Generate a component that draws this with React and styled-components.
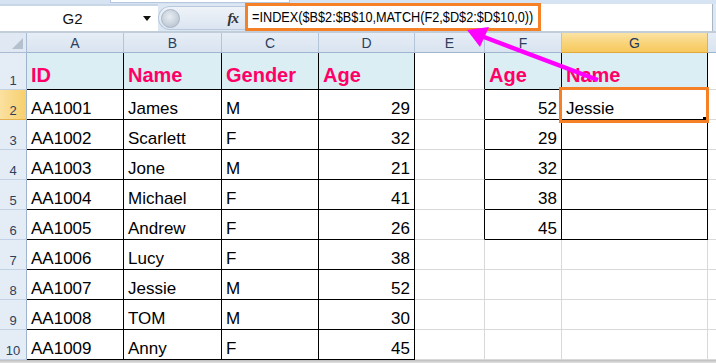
import React from "react";
import styled, { createGlobalStyle } from "styled-components";

const BLACK = "#000";
const GRID = "#d9d9d9";
const PINK = "#ff0066";
const ORANGE = "#f68026";

const columns = ["A", "B", "C", "D", "E", "F", "G", ""];

const data = [
  ["AA1001", "James", "M", 29, 52, "Jessie"],
  ["AA1002", "Scarlett", "F", 32, 29, ""],
  ["AA1003", "Jone", "M", 21, 32, ""],
  ["AA1004", "Michael", "F", 41, 38, ""],
  ["AA1005", "Andrew", "F", 26, 45, ""],
  ["AA1006", "Lucy", "F", 38, "", ""],
  ["AA1007", "Jessie", "M", 52, "", ""],
  ["AA1008", "TOM", "M", 30, "", ""],
  ["AA1009", "Anny", "F", 45, "", ""],
];

const GlobalStyle = createGlobalStyle`
  html, body {
    margin: 0;
    padding: 0;
    background: #fff;
    overflow: hidden;
  }
  body {
    font-family: "Liberation Sans", Arial, sans-serif;
  }
`;

const App = () => {
  const header = ["ID", "Name", "Gender", "Age", "", "Age", "Name", ""];

  // black borders for A1:D10 and F1:G6, grey gridlines elsewhere
  const borderFor = (row, col) => {
    const inMain = col <= 3;
    const inSecond = (col === 5 || col === 6) && row <= 6;
    return {
      right: inMain || inSecond || (col === 4 && row <= 6) ? BLACK : GRID,
      bottom: inMain || inSecond ? BLACK : GRID,
    };
  };

  const rows = [header, ...data.map((d) => [d[0], d[1], d[2], d[3], "", d[4], d[5], ""])];

  return (
    <Window>
      <GlobalStyle />
      <RibbonEdge>
        <RibbonTab />
      </RibbonEdge>
      <FormulaBar>
        <NameBox>
          <NameLabel>G2</NameLabel>
          <DropArrow />
        </NameBox>
        <Splitter>
          <Knob />
          <Fx>fx</Fx>
        </Splitter>
        <FormulaInput>
          <Highlight>
            <Squeezed>=INDEX($B$2:$B$10,MATCH(F2,$D$2:$D$10,0))</Squeezed>
          </Highlight>
        </FormulaInput>
      </FormulaBar>
      <BarGap />
      <Sheet>
        <Corner />
        {columns.map((c, i) => (
          <ColHead key={i} $selected={c === "G"}>
            {c}
          </ColHead>
        ))}
        {rows.map((cells, r) => {
          const row = r + 1;
          return (
            <React.Fragment key={row}>
              <RowHead $selected={row === 2}>{row}</RowHead>
              {cells.map((v, c) => {
                const b = borderFor(row, c);
                const tinted = row === 1 && (c <= 3 || c === 5 || c === 6);
                return (
                  <Cell
                    key={c}
                    $right={b.right}
                    $bottom={b.bottom}
                    $bg={tinted ? "#daeef3" : "#fff"}
                    $num={typeof v === "number"}
                    $head={row === 1}
                  >
                    {v}
                  </Cell>
                );
              })}
            </React.Fragment>
          );
        })}
        <Selection>
          <FillHandle />
        </Selection>
      </Sheet>
      <BottomShadow />
      <Arrow viewBox="0 0 716 363">
        <line x1="598" y1="80" x2="484" y2="37" stroke="#ff00ff" strokeWidth="4.5" />
        <polygon points="467,30 489,27 480,47" fill="#ff00ff" />
      </Arrow>
    </Window>
  );
};

const Window = styled.div`
  position: relative;
  width: 716px;
  height: 363px;
  overflow: hidden;
  background: #fff;
  display: flex;
  flex-direction: column;
`;

const RibbonEdge = styled.div`
  height: 4px;
  background: #d6e3f3;
  display: flex;
`;

const RibbonTab = styled.div`
  margin-left: 110px;
  width: 180px;
  height: 3px;
  background: #fff;
  border: 1px solid #b4c7df;
  border-top: none;
  box-sizing: border-box;
`;

const FormulaBar = styled.div`
  height: 27px;
  background: #dde7f3;
  display: flex;
  align-items: stretch;
`;

const NameBox = styled.div`
  width: 158px;
  background: #fff;
  border-top: 2px solid #c9d6e6;
  display: flex;
  align-items: center;
  font-size: 15px;
  color: #111;
`;

const NameLabel = styled.span`
  flex: 1;
  text-align: center;
  padding-left: 2px;
`;

const DropArrow = styled.span`
  width: 0;
  height: 0;
  border-left: 4px solid transparent;
  border-right: 4px solid transparent;
  border-top: 5px solid #111;
  margin-right: 7px;
`;

const Splitter = styled.div`
  width: 87px;
  margin: 2px 0 1px;
  background: linear-gradient(#eef3f9, #dbe5f1);
  border: 1px solid #b9c8da;
  border-right: none;
  border-radius: 12px 0 0 12px;
  display: flex;
  align-items: center;
  justify-content: space-between;
  box-sizing: border-box;
`;

const Knob = styled.span`
  width: 17px;
  height: 17px;
  border-radius: 50%;
  margin-left: 2px;
  background: radial-gradient(circle at 45% 40%, #e8edf3 0, #c9d2dc 55%, #aeb9c6 100%);
  border: 1px solid #a9b6c6;
`;

const Fx = styled.span`
  font-family: "Liberation Serif", "Times New Roman", serif;
  font-style: italic;
  font-weight: bold;
  font-size: 15px;
  color: #333;
  margin-right: 7px;
  letter-spacing: -1px;
`;

const FormulaInput = styled.div`
  flex: 1;
  margin-right: 3px;
  background: #fff;
  border-right: 1px solid #a9b6c6;
  display: flex;
  align-items: stretch;
`;

const Highlight = styled.span`
  align-self: flex-start;
  margin-top: -1px;
  width: 296px;
  height: 28px;
  box-sizing: border-box;
  border: 3px solid ${ORANGE};
  padding-left: 4px;
  display: flex;
  align-items: center;
  position: relative;
  z-index: 2;
`;

const Squeezed = styled.span`
  display: inline-block;
  font-size: 15.5px;
  color: #000;
  white-space: nowrap;
  transform: scaleX(0.82);
  transform-origin: left center;
`;

const BarGap = styled.div`
  height: 2px;
  background: #c2cdda;
`;

const Sheet = styled.div`
  position: relative;
  display: grid;
  grid-template-columns: 27px 97px 98px 97px 96px 70px 77px 146px 1fr;
  grid-template-rows: 20px 37px repeat(9, 30px);
`;

const Corner = styled.div`
  background: #dfe8f3;
  border-right: 1px solid #a9bcd4;
  border-bottom: 1px solid #a9bcd4;
  box-sizing: border-box;
  position: relative;
  &::after {
    content: "";
    position: absolute;
    right: 3px;
    bottom: 3px;
    border-left: 11px solid transparent;
    border-bottom: 11px solid #b4c0cd;
  }
`;

const ColHead = styled.div`
  box-sizing: border-box;
  background: ${(p) =>
    p.$selected ? "linear-gradient(#fbe3a4, #f8d274 60%, #f6c95e)" : "linear-gradient(#e6edf6, #d9e4f0)"};
  border-right: 1px solid ${(p) => (p.$selected ? "#e2b251" : "#b3c4da")};
  border-bottom: 1px solid ${(p) => (p.$selected ? "#e2a93a" : "#9fb5cf")};
  display: flex;
  align-items: center;
  justify-content: center;
  font-size: 14px;
  line-height: 16px;
  color: ${(p) => (p.$selected ? "#213a5c" : "#2d3f5c")};
`;

const RowHead = styled.div`
  box-sizing: border-box;
  background: ${(p) => (p.$selected ? "linear-gradient(90deg, #fbe1a0, #f7cf6c)" : "#e4ecf6")};
  border-right: 1px solid #9fb5cf;
  border-bottom: 1px solid ${(p) => (p.$selected ? "#e2b251" : "#c2d1e3")};
  display: flex;
  align-items: flex-end;
  justify-content: center;
  font-size: 13px;
  line-height: 15px;
  padding-bottom: 1px;
  color: #2d3f5c;
`;

const Cell = styled.div`
  box-sizing: border-box;
  min-width: 0;
  overflow: hidden;
  white-space: nowrap;
  background: ${(p) => p.$bg};
  border-right: 1px solid ${(p) => p.$right};
  border-bottom: 1px solid ${(p) => p.$bottom};
  display: flex;
  align-items: flex-end;
  justify-content: ${(p) => (p.$num ? "flex-end" : "flex-start")};
  padding: 0 4px ${(p) => (p.$head ? "2px" : "1px")};
  font-size: ${(p) => (p.$head ? "20px" : "17px")};
  line-height: ${(p) => (p.$head ? "23px" : "19px")};
  font-weight: ${(p) => (p.$head ? "bold" : "normal")};
  color: ${(p) => (p.$head ? PINK : "#000")};
`;

const Selection = styled.div`
  position: absolute;
  left: 559px;
  top: 54px;
  width: 150px;
  height: 36px;
  box-sizing: border-box;
  border: 3px solid ${ORANGE};
  pointer-events: none;
`;

const FillHandle = styled.span`
  position: absolute;
  right: 0;
  bottom: 0;
  width: 3px;
  height: 3px;
  background: #000;
`;

const BottomShadow = styled.div`
  height: 3px;
  background: linear-gradient(#bdbdbd, #e4e4e4);
`;

const Arrow = styled.svg`
  position: absolute;
  left: 0;
  top: 0;
  width: 716px;
  height: 363px;
  pointer-events: none;
  z-index: 5;
`;

export default App;
